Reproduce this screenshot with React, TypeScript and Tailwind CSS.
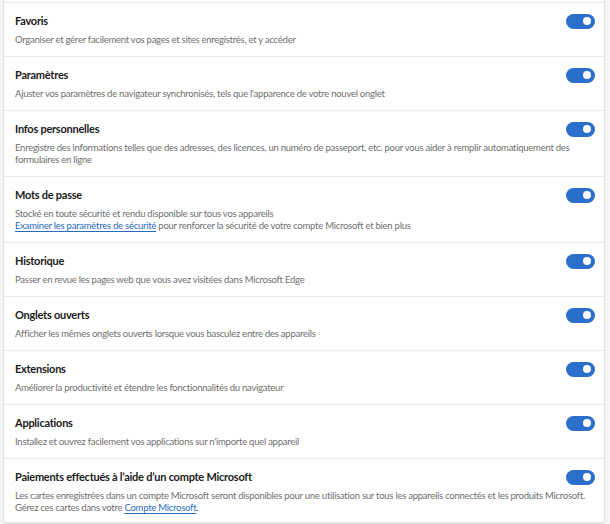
import { ReactNode } from 'react';

type Row = {
  title: string;
  desc: ReactNode;
};

const Lien = ({ children }: { children: ReactNode }) => (
  <a className="text-[#2a6bc2] underline underline-offset-2 decoration-[#2a6bc2]">{children}</a>
);

const rows: Row[] = [
  {
    title: 'Favoris',
    desc: 'Organiser et gérer facilement vos pages et sites enregistrés, et y accéder',
  },
  {
    title: 'Paramètres',
    desc: "Ajuster vos paramètres de navigateur synchronisés, tels que l'apparence de votre nouvel onglet",
  },
  {
    title: 'Infos personnelles',
    desc: 'Enregistre des informations telles que des adresses, des licences, un numéro de passeport, etc. pour vous aider à remplir automatiquement des formulaires en ligne',
  },
  {
    title: 'Mots de passe',
    desc: (
      <>
        Stocké en toute sécurité et rendu disponible sur tous vos appareils
        <br />
        <Lien>Examiner les paramètres de sécurité</Lien> pour renforcer la sécurité de votre compte Microsoft et bien plus
      </>
    ),
  },
  {
    title: 'Historique',
    desc: 'Passer en revue les pages web que vous avez visitées dans Microsoft Edge',
  },
  {
    title: 'Onglets ouverts',
    desc: 'Afficher les mêmes onglets ouverts lorsque vous basculez entre des appareils',
  },
  {
    title: 'Extensions',
    desc: 'Améliorer la productivité et étendre les fonctionnalités du navigateur',
  },
  {
    title: 'Applications',
    desc: "Installez et ouvrez facilement vos applications sur n'importe quel appareil",
  },
  {
    title: 'Paiements effectués à l’aide d’un compte Microsoft',
    desc: (
      <>
        Les cartes enregistrées dans un compte Microsoft seront disponibles pour une utilisation sur tous les appareils connectés et les produits Microsoft.
        <br />
        Gérez ces cartes dans votre <Lien>Compte Microsoft</Lien>.
      </>
    ),
  },
];

function Toggle() {
  return (
    <div className="w-[29px] h-[15px] mr-[3px] rounded-full bg-[#2b6fcc] flex items-center justify-end pr-[4px] shrink-0">
      <div className="w-[8px] h-[8px] rounded-full bg-white" />
    </div>
  );
}

export default function App() {
  return (
    <div
      className="min-h-screen bg-[#f5f5f5] pl-[3px] pr-[5px] pb-[5px]"
      style={{ fontFamily: 'Lato, "Noto Sans", sans-serif' }}
    >
      <div className="bg-white border-x border-b border-[#e3e3e3] rounded-b-[3px] shadow-[0_1px_2px_rgba(0,0,0,0.08)]">
        <div className="h-[3px] border-b border-[#ececec]" />
        {rows.map((row, i) => {
          const last = i === rows.length - 1;
          return (
            <div
              key={row.title}
              className={`pl-[11px] pr-[6px] pt-[9px] ${last ? 'pb-[8px]' : 'pb-[10px] border-b border-[#ececec]'}`}
            >
              <div className="flex items-center justify-between">
                <div className="text-[11px] leading-[18px] font-bold tracking-[-0.25px] text-[#1b1b1b]">{row.title}</div>
                <Toggle />
              </div>
              <div className="mt-[4px] pr-[2px] text-[9.5px] leading-[12px] tracking-[-0.25px] text-[#6f6f6f]">{row.desc}</div>
            </div>
          );
        })}
      </div>
    </div>
  );
}
